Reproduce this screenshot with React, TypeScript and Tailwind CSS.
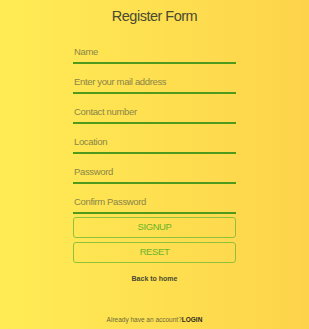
import React from 'react';

const fields = [
  { id: 'name', placeholder: 'Name', type: 'text' },
  { id: 'email', placeholder: 'Enter your mail address', type: 'email' },
  { id: 'contact', placeholder: 'Contact number', type: 'text' },
  { id: 'location', placeholder: 'Location', type: 'text' },
  { id: 'password', placeholder: 'Password', type: 'password' },
  { id: 'confirm', placeholder: 'Confirm Password', type: 'password' },
];

const App: React.FC = () => {
  return (
    <div className="min-h-[329px] w-full bg-gradient-to-r from-[#ffec55] to-[#fdd34b] font-['Liberation_Sans',Arial,sans-serif]">
      <div className="mx-auto w-[163px]">
        <h1 className="flex h-[34px] items-center justify-center text-[14.5px] font-normal tracking-[-0.5px] text-[#4a4a32]">
          Register Form
        </h1>

        <form className="flex flex-col">
          {fields.map((f) => (
            <input
              key={f.id}
              type={f.type}
              placeholder={f.placeholder}
              className="h-[30px] w-full border-b-2 border-[#4f9a1c] bg-transparent px-[1px] pt-[10px] pb-[3px] text-[9.5px] tracking-[-0.35px] text-[#4a4a32] outline-none placeholder:text-[#8a8548]"
            />
          ))}

          <div className="mt-[3px] flex flex-col gap-[4px]">
            <button
              type="submit"
              className="h-[21px] w-full rounded-[3px] border border-[#8fc23a] text-[9.5px] tracking-[-0.4px] text-[#6ab42a]"
            >
              SIGNUP
            </button>
            <button
              type="reset"
              className="h-[21px] w-full rounded-[3px] border border-[#8fc23a] text-[9.5px] tracking-[-0.4px] text-[#6ab42a]"
            >
              RESET
            </button>
          </div>
        </form>

        <div className="mt-[11px] text-center text-[7px] font-semibold text-[#4a4a32]">
          <a href="#home">Back to home</a>
        </div>

        <p className="mt-[30px] text-center text-[6.5px] text-[#6b6a3a]">
          Already have an account?<a href="#login" className="font-bold text-[#2a2a1a]">LOGIN</a>
        </p>
      </div>
    </div>
  );
};

export default App;
